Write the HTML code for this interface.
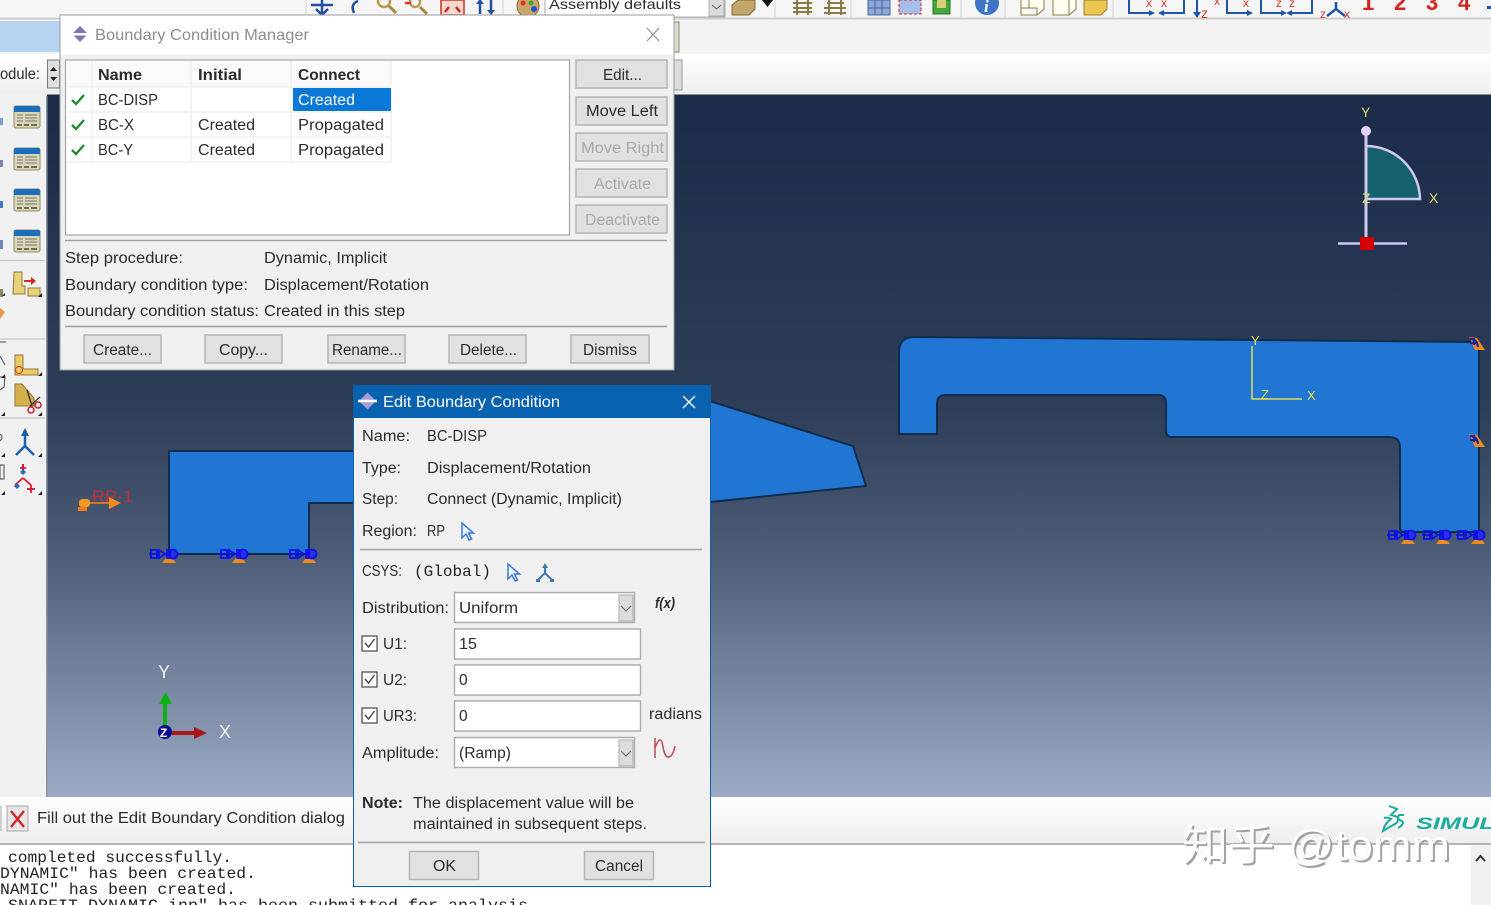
<!DOCTYPE html>
<html><head><meta charset="utf-8"><title>Boundary Condition Manager</title>
<style>
html,body{margin:0;padding:0;width:1491px;height:905px;overflow:hidden;background:#f0f0f0}
svg{display:block;filter:blur(.35px)}
text{font-family:"Liberation Sans","Noto Sans CJK SC",sans-serif;font-size:15.5px;fill:#2b2b2b;white-space:pre}
.b{font-weight:bold}
.d{fill:#a8a8a8;stroke:none}
.m{font-family:"Liberation Mono",monospace;font-size:16px;fill:#222}
.btn{fill:#e1e1e1;stroke:#b4b4b4;stroke-width:1.5}
.inp{fill:#fff;stroke:#aeaeae;stroke-width:1.5}
.sep{stroke:#a0a0a0;stroke-width:1.5}
.r{font-weight:bold;fill:#d2231f;font-size:22px}
.ax{fill:#d5392f;font-size:12px}
</style></head><body>
<svg width="1491" height="905" viewBox="0 0 1491 905" xmlns="http://www.w3.org/2000/svg">
<defs>
<linearGradient id="vp" x1="0" y1="0" x2="0" y2="1">
<stop offset="0" stop-color="#1b2b47"/><stop offset=".45" stop-color="#2f3e58"/><stop offset=".66" stop-color="#4f5e78"/><stop offset=".85" stop-color="#7a89a3"/><stop offset="1" stop-color="#9cabc5"/>
</linearGradient>
<linearGradient id="bar" x1="0" y1="0" x2="0" y2="1"><stop offset="0" stop-color="#fff"/><stop offset="1" stop-color="#eeeeee"/></linearGradient>
<g id="tbl"><rect x="0" y="0" width="26" height="22" rx="2" fill="#d9d5b8" stroke="#8f8a68"/><path d="M0 6V2q0-2 2-2h22q2 0 2 2v4z" fill="#1c6dbb"/><path d="M3 9h6M3 12h6M3 15h6M11 9h12M11 12h12M11 15h12" stroke="#77776c" stroke-width="1.100"/><path d="M3 18h5v2H3zM10 18h5v2h-5zM17 18h6v2h-6z" fill="#6d6b50"/></g>
<g id="bc" fill="none" stroke="#0a12e8" stroke-width="1.800"><path d="M-14-4h6v8h-6zM-16 0h10M-6-4l6 4-6 4zM0 0h3"/><circle cx="8" cy="0" r="4.500" fill="#2a30e8"/><path d="M2-4h3v8H2z"/></g>
<path id="tri" d="M-7 4L0-5 7 4z" fill="#ef8a1e"/>
</defs>

<!-- chrome -->
<rect width="1491" height="905" fill="#f0f0f0"/>
<rect x="0" y="0" width="1491" height="18" fill="#f5f5f5"/>
<rect x="0" y="17.500" width="1491" height="2" fill="#cfcfcf"/>
<rect x="0" y="20" width="1491" height="34" fill="#f3f3f3"/>
<rect x="0" y="54" width="1491" height="40" fill="url(#bar)"/>
<rect x="0" y="21" width="62" height="31" fill="#b6d4f1"/>
<rect x="674" y="22" width="5" height="30" fill="#dcdcd0" stroke="#8a8a70"/>
<rect x="674" y="60" width="8" height="30" fill="#dcdcdc" stroke="#999"/>
<rect x="47" y="94" width="1444" height="2" fill="#8b8f96"/>
<rect x="47" y="95" width="1444" height="702" fill="url(#vp)"/>
<rect x="0" y="96" width="47" height="701" fill="#f1f1f1"/>
<rect x="46" y="96" width="1.500" height="701" fill="#8c93a0"/>
<rect x="0" y="797" width="1491" height="46" fill="url(#bar)"/>
<rect x="0" y="843" width="1491" height="2" fill="#b4b4b4"/>
<rect x="0" y="845" width="1491" height="60" fill="#fff"/>
<rect x="1471" y="846" width="20" height="59" fill="#f0f0f0"/>
<path d="M1476 861l4.500-5 4.500 5" fill="none" stroke="#333" stroke-width="2"/>

<!-- top toolbar -->
<g fill="none" stroke-width="2.500">
<path d="M311 5h22M322-4v18M316 9l6 6 6-6" stroke="#23509c"/>
<path d="M358 1q-8 3-4 12" stroke="#23509c"/>
<circle cx="384" cy="1" r="6" stroke="#b89b55"/><path d="M389 6l7 7" stroke="#a8873a" stroke-width="3"/>
<circle cx="415" cy="2" r="5" stroke="#b89b55"/><path d="M420 7l7 7" stroke="#a8873a" stroke-width="3"/>
<path d="M405 3h6M408 0v-2" stroke="#d33"/>
<rect x="441" y="0" width="23" height="15" fill="#f4d9cf" stroke="#c9331f" stroke-width="1.500"/><path d="M445 12l4-5M460 12l-4-5" stroke="#d2231f"/>
<path d="M480 14V0M491 0v14" stroke="#23509c"/><path d="M476 4l4-5 4 5M487 10l4 5 4-5" fill="#23509c" stroke="none"/>
</g>
<circle cx="528" cy="6" r="11" fill="#caa66b" stroke="#8a6a36"/><circle cx="523" cy="3" r="2.500" fill="#d33"/><circle cx="531" cy="3" r="2.500" fill="#3a3"/><circle cx="534" cy="9" r="3" fill="#25c"/>
<rect x="545" y="-3" width="180" height="20" fill="#fff" stroke="#adadad"/>
<rect x="709" y="-3" width="15" height="19" fill="#dcdcdc" stroke="#adadad"/><path d="M712 5l4.500 4 4.500-4" fill="none" stroke="#666"/>
<text x="549" y="9" textLength="132" lengthAdjust="spacingAndGlyphs" style="font-size:14px">Assembly defaults</text>
<g stroke="#d8d8d8"><path d="M306 0v17M503 0v17M775 0v17M851 0v17M961 0v17M1005 0v17M1113 0v17"/></g>
<path d="M732 5l6-5h17v9l-6 6h-17z" fill="#c3a66a" stroke="#806a30"/>
<path d="M762 0h11l-5.500 7z" fill="#111"/>
<path d="M797 0v15M808 0v15M793 3h19M793 8h19M793 12h19" stroke="#8a7a45" stroke-width="2"/>
<path d="M829 0v15M841 0v15M824 8h22M824 13h22M827 3h17" stroke="#8a7a45" stroke-width="2"/>
<path d="M868 0h22v15h-22z" fill="#8ea8d8" stroke="#4a62a0"/><path d="M875 0v15M882 0v15M868 8h22" stroke="#4a62a0"/>
<path d="M899 0h22v14h-22z" fill="#a7bee8" stroke="#c22" stroke-dasharray="3 2"/>
<path d="M933 0h17v14h-17z" fill="#44a83e" stroke="#1e7a1e"/><path d="M937 0h9v8h-9z" fill="#d8cf7c"/>
<ellipse cx="987" cy="3" rx="12" ry="12" fill="#3d74c4"/><text x="984" y="12" style="font:italic bold 17px 'Liberation Serif',serif;fill:#fff">i</text>
<path d="M1021 0v15h16l7-6V0M1021 8h16v7M1029 0v8" fill="#fffdf0" stroke="#8a7a45"/>
<path d="M1053 0v15h16l7-6V0" fill="#fffdf0" stroke="#8a7a45"/><path d="M1069 0v15" stroke="#8a7a45"/>
<path d="M1084 0v15h17l6-6V0z" fill="#ecc552" stroke="#9a8030"/>
<g fill="none" stroke="#1f57a8" stroke-width="2">
<path d="M1129 0v13h21"/><path d="M1184 0v13h-21"/><path d="M1197 0v13"/><path d="M1227 0v13h21"/><path d="M1261 0v13h21"/><path d="M1312 0v13h-21"/>
<path d="M1336 2v7l-9 7M1336 9l9 7" stroke-width="2.500"/>
</g>
<g fill="#1f57a8"><path d="M1149 10l6 3-6 3zM1164 10l-6 3 6 3zM1193 12h8l-4 6zM1247 10l6 3-6 3zM1281 10l6 3-6 3zM1292 10l-6 3 6 3z"/></g>
<text class="ax" x="1146" y="7">x</text><text class="ax" x="1161" y="7">x</text><text class="ax" x="1201" y="18" style="font-size:14px">z</text><text class="ax" x="1214" y="5">x</text><text class="ax" x="1243" y="7">x</text><text class="ax" x="1276" y="7">z</text><text class="ax" x="1289" y="7">z</text><text class="ax" x="1320" y="18">z</text><text class="ax" x="1344" y="18">x</text>
<text class="r" x="1362" y="10">1</text><text class="r" x="1394" y="10">2</text><text class="r" x="1426" y="10">3</text><text class="r" x="1458" y="10">4</text>
<path d="M1487 6h4v3h-4z" fill="#1f57a8"/>

<text x="0" y="79" textLength="40" lengthAdjust="spacingAndGlyphs">odule:</text>
<rect x="47.500" y="60" width="12" height="28" fill="#dedede" stroke="#777"/><path d="M50 71l3.500-4 3.500 4zM50 77l3.500 4 3.500-4z" fill="#222"/>

<!-- left toolbar -->
<use href="#tbl" x="14" y="106"/><use href="#tbl" x="14" y="148"/><use href="#tbl" x="14" y="189"/><use href="#tbl" x="14" y="230"/>
<path d="M0 260.500h45M0 339h45M0 418h45" stroke="#c6c6c6" stroke-width="1.200"/>
<rect x="0" y="118" width="3" height="7" fill="#7da0d0"/><rect x="0" y="160" width="3" height="7" fill="#7a86b0"/><rect x="0" y="201" width="3" height="7" fill="#3f78c0"/><rect x="0" y="240" width="3" height="9" fill="#6f86b5"/>
<path d="M0 289h3v8H0z" fill="#8a8a6a"/><path d="M0 308l5 4-5 7z" fill="#e69a3f"/>
<path d="M14 272h8v14h3v8H13z" fill="#ead27a" stroke="#8e7a35"/><path d="M28 288h12v8H28z" fill="#ead27a" stroke="#8e7a35"/><path d="M24 280h7v-3l5 4-5 4v-3h-7z" fill="#d3261c"/>
<path d="M15 355h8v14h15v6H15z" fill="#ecca68" stroke="#8e7a35"/><circle cx="19" cy="370" r="3.500" fill="none" stroke="#d8381f"/>
<path d="M15 384h7l12 14v8H15z" fill="#d5b04f" stroke="#8e7a35"/><path d="M27 390l5 16M40 397l-10 9" stroke="#333" stroke-width="1.300"/><circle cx="31" cy="410" r="3" fill="none" stroke="#c8202a" stroke-width="1.500"/><circle cx="38" cy="405" r="3" fill="none" stroke="#c8202a" stroke-width="1.500"/>
<path d="M25 430v16l-9 9M25 446l9 9" fill="none" stroke="#1c5faf" stroke-width="2.500"/><path d="M21 436l4-8 4 8z" fill="#1c5faf"/>
<path d="M22 464h2v6h-2z" fill="#d13"/><path d="M20 468h6M23 478l-8 7M23 478l8 7" stroke="#d13" stroke-width="1.700"/><path d="M20 472l3-3 3 3-3 3zM14 486l3-3 3 3-3 3z" fill="#2566c0"/><path d="M27 489h8M31 485v8" stroke="#d13" stroke-width="1.700"/>
<path d="M0 342h6M0 356l5 9M0 377h5l-1 10-4 3M0 434q4 3 0 7M0 465h4v14H0z" fill="none" stroke="#666" stroke-width="1.200"/>
<path d="M5 296v-3l-3 3zM42 297v-4l-4 4zM42 376v-4l-4 4zM5 378v-4l-4 4zM42 416v-4l-4 4zM5 416v-4l-4 4zM42 457v-4l-4 4zM5 457v-4l-4 4zM42 495v-4l-4 4zM5 495v-4l-4 4z" fill="#222"/>

<!-- parts -->
<g fill="#2176d3" stroke="#0d2c4e" stroke-width="2">
<path d="M169 451H360V503H309V554H169z"/>
<path d="M700 398L853 446L866 486L700 503z"/>
<path d="M899 352Q899 337 914 337L1479 342V532H1404Q1400 532 1400 528V448Q1400 437 1389 437H1172Q1166 437 1166 431V403Q1166 395 1158 395H946Q937 395 937 404V434H899z"/>
</g>

<!-- mini sketch glyph -->
<path d="M1366 146A54 54 0 0 1 1420 199H1366z" fill="#14606f" stroke="#cfc9ee" stroke-width="2.500"/>
<path d="M1366 131V243" stroke="#d0c8f0" stroke-width="3"/>
<path d="M1338 243.500h69" stroke="#cfc9ee" stroke-width="2.500"/>
<circle cx="1366" cy="131" r="5" fill="#e2d2fa"/>
<rect x="1360" y="237" width="14" height="13" fill="#d30000"/>
<text x="1361" y="117" style="font-size:14px;fill:#dcdc78">Y</text><text x="1429" y="203" style="font-size:14px;fill:#dcdc78">X</text><text x="1362" y="203" style="font-size:14px;fill:#dcdc78">Z</text>

<!-- local csys on part -->
<path d="M1252 346V399H1302" fill="none" stroke="#dede55" stroke-width="1.500"/>
<text x="1251" y="345" style="font-size:13px;fill:#e3e34a">Y</text><text x="1261" y="399" style="font-size:13px;fill:#e3e34a">Z</text><text x="1307" y="400" style="font-size:13px;fill:#e3e34a">X</text>

<!-- BC marks -->
<use href="#tri" x="169" y="559"/><use href="#tri" x="239" y="559"/><use href="#tri" x="309" y="559"/>
<use href="#bc" x="165" y="554"/><use href="#bc" x="235" y="554"/><use href="#bc" x="304" y="554"/>
<use href="#tri" x="1408" y="540"/><use href="#tri" x="1443" y="540"/><use href="#tri" x="1478" y="540"/>
<use href="#bc" x="1403" y="535"/><use href="#bc" x="1438" y="535"/><use href="#bc" x="1472" y="535"/>
<path d="M1469 337l8 1 8 12h-10z" fill="#ef8a1e"/><path d="M1470 339q7 0 8 8M1474 338v7M1470 343h6" fill="none" stroke="#22229a" stroke-width="2.200"/>
<path d="M1469 434l8 1 8 12h-10z" fill="#ef8a1e"/><path d="M1470 436q7 0 8 8M1474 435v7M1470 440h6" fill="none" stroke="#22229a" stroke-width="2.200"/>

<!-- RP -->
<text x="92" y="502" textLength="41" lengthAdjust="spacingAndGlyphs" style="font-size:17px;fill:#c0303a">RP-1</text>
<path d="M85 503H110" stroke="#ef8a1e" stroke-width="1.500"/><path d="M109 497l12 6-12 6z" fill="#ef8a1e"/>
<rect x="79" y="499" width="11" height="8" rx="3" fill="#ef9a1e"/><rect x="78" y="507" width="9" height="4" fill="#ef7a1e"/>

<!-- global triad -->
<path d="M165 726V700" stroke="#10b010" stroke-width="4"/><path d="M159 704l6.500-12 6.500 12z" fill="#10b010"/>
<path d="M172 733H197" stroke="#a81818" stroke-width="4"/><path d="M194 727l13 6-13 6z" fill="#a81818"/>
<circle cx="165" cy="732" r="7" fill="#0a0a90"/><text x="160" y="737" style="font-size:12px;fill:#fff;font-weight:bold">Z</text>
<text x="158" y="678" style="font-size:18px;fill:#f4f4f4">Y</text><text x="219" y="738" style="font-size:18px;fill:#f4f4f4">X</text>

<!-- prompt -->
<rect x="7" y="806" width="21" height="25" fill="#e6e6e6" stroke="#a9a9a9"/>
<path d="M11 811l13 16M24 811l-13 16" stroke="#d6232a" stroke-width="2.300"/>
<rect x="0" y="806" width="2" height="25" fill="#cfcfcf"/>
<text x="37" y="823" textLength="308" lengthAdjust="spacingAndGlyphs">Fill out the Edit Boundary Condition dialog</text>

<!-- logo -->
<path d="M1389 806l8 3-6 6 7 2q1 6-5 8l-10 6q2-8 8-12-3-2-7-1M1404 815h-5q-3 4 3 6 3 3-4 7" fill="none" stroke="#1eab9c" stroke-width="2"/>
<text x="1416" y="829" textLength="104" lengthAdjust="spacingAndGlyphs" style="font:italic bold 17px 'Liberation Sans',sans-serif;fill:#1eab9c">SIMULIA</text>

<!-- messages -->
<text class="m" x="8" y="862" textLength="224" lengthAdjust="spacingAndGlyphs">completed successfully.</text>
<text class="m" x="0" y="878" textLength="256" lengthAdjust="spacingAndGlyphs">DYNAMIC" has been created.</text>
<text class="m" x="0" y="894" textLength="236" lengthAdjust="spacingAndGlyphs">NAMIC" has been created.</text>
<text class="m" x="8" y="910" textLength="520" lengthAdjust="spacingAndGlyphs">SNAPFIT_DYNAMIC.inp" has been submitted for analysis</text>

<!-- watermark -->
<text x="1184" y="862" textLength="268" lengthAdjust="spacingAndGlyphs" style="font-size:43px;fill:#a2a2a2">知乎 @tomm</text>
<text x="1182" y="860" textLength="268" lengthAdjust="spacingAndGlyphs" style="font-size:43px;fill:#fdfdfd">知乎 @tomm</text>

<!-- Boundary Condition Manager -->
<rect x="60" y="15" width="614" height="355" fill="#f0f0f0" stroke="#9b9b9b"/>
<rect x="60.500" y="15.500" width="613" height="39" fill="#fff"/>
<g><path d="M72 34l8-8 8 8-8 8z" fill="#7c76b8"/><path d="M71 33h18v2.500H71z" fill="#fff"/></g>
<text x="95" y="40" textLength="214" lengthAdjust="spacingAndGlyphs" style="font-size:16px;fill:#8c8c8c">Boundary Condition Manager</text>
<path d="M647 28l12 13M659 28l-12 13" stroke="#8a8a8a" stroke-width="1.100"/>
<rect x="65.500" y="60" width="504" height="175" fill="#fff" stroke="#a6a6a6" stroke-width="1.200"/>
<rect x="66" y="61" width="325" height="26" fill="#fafafa"/>
<path d="M92 61V162M191 61V162M291 61V162M391 61V162M66 87H391M66 112H391M66 137H391M66 162H391" stroke="#ececec" stroke-width="1.200"/>
<rect x="293" y="88" width="98" height="23" fill="#0a78d7"/>
<path d="M72 100l4 4 8-9" fill="none" stroke="#1a8a2c" stroke-width="2.300"/><path d="M72 125l4 4 8-9" fill="none" stroke="#1a8a2c" stroke-width="2.300"/><path d="M72 150l4 4 8-9" fill="none" stroke="#1a8a2c" stroke-width="2.300"/>
<text class="b" x="98" y="80" textLength="44" lengthAdjust="spacingAndGlyphs">Name</text>
<text class="b" x="198" y="80" textLength="44" lengthAdjust="spacingAndGlyphs">Initial</text>
<text class="b" x="298" y="80" textLength="62" lengthAdjust="spacingAndGlyphs">Connect</text>
<text x="98" y="105" textLength="60" lengthAdjust="spacingAndGlyphs">BC-DISP</text>
<text x="298" y="105" textLength="57" lengthAdjust="spacingAndGlyphs" style="fill:#fff">Created</text>
<text x="98" y="130" textLength="36" lengthAdjust="spacingAndGlyphs">BC-X</text>
<text x="198" y="130" textLength="57" lengthAdjust="spacingAndGlyphs">Created</text>
<text x="298" y="130" textLength="86" lengthAdjust="spacingAndGlyphs">Propagated</text>
<text x="98" y="155" textLength="35" lengthAdjust="spacingAndGlyphs">BC-Y</text>
<text x="198" y="155" textLength="57" lengthAdjust="spacingAndGlyphs">Created</text>
<text x="298" y="155" textLength="86" lengthAdjust="spacingAndGlyphs">Propagated</text>
<rect class="btn" x="576" y="60" width="91" height="28"/><rect class="btn" x="576" y="97" width="91" height="28"/><rect class="btn" x="576" y="133" width="91" height="28"/><rect class="btn" x="576" y="169" width="91" height="28"/><rect class="btn" x="576" y="205" width="91" height="28"/>
<text x="603" y="80" textLength="39" lengthAdjust="spacingAndGlyphs">Edit...</text>
<text x="586" y="116" textLength="72" lengthAdjust="spacingAndGlyphs">Move Left</text>
<text class="d" x="581" y="153" textLength="83" lengthAdjust="spacingAndGlyphs">Move Right</text>
<text class="d" x="594" y="189" textLength="57" lengthAdjust="spacingAndGlyphs">Activate</text>
<text class="d" x="585" y="225" textLength="75" lengthAdjust="spacingAndGlyphs">Deactivate</text>
<path class="sep" d="M65 240.500H667M65 326.500H667"/>
<text x="65" y="263" textLength="118" lengthAdjust="spacingAndGlyphs">Step procedure:</text>
<text x="264" y="263" textLength="123" lengthAdjust="spacingAndGlyphs">Dynamic, Implicit</text>
<text x="65" y="290" textLength="183" lengthAdjust="spacingAndGlyphs">Boundary condition type:</text>
<text x="264" y="290" textLength="165" lengthAdjust="spacingAndGlyphs">Displacement/Rotation</text>
<text x="65" y="316" textLength="194" lengthAdjust="spacingAndGlyphs">Boundary condition status:</text>
<text x="264" y="316" textLength="141" lengthAdjust="spacingAndGlyphs">Created in this step</text>
<rect class="btn" x="84" y="335" width="77" height="28"/><rect class="btn" x="205" y="335" width="77" height="28"/><rect class="btn" x="328" y="335" width="77" height="28"/><rect class="btn" x="449" y="335" width="77" height="28"/><rect class="btn" x="571" y="335" width="78" height="28"/>
<text x="93" y="355" textLength="59" lengthAdjust="spacingAndGlyphs">Create...</text>
<text x="219" y="355" textLength="49" lengthAdjust="spacingAndGlyphs">Copy...</text>
<text x="332" y="355" textLength="70" lengthAdjust="spacingAndGlyphs">Rename...</text>
<text x="460" y="355" textLength="57" lengthAdjust="spacingAndGlyphs">Delete...</text>
<text x="583" y="355" textLength="54" lengthAdjust="spacingAndGlyphs">Dismiss</text>

<!-- Edit Boundary Condition -->
<rect x="353.500" y="385.500" width="357" height="501" fill="#f0f0f0" stroke="#0b5ea8"/>
<rect x="354" y="385" width="356" height="33" fill="#0862b0"/>
<g><path d="M359 401l8.500-8.500 8.500 8.500-8.500 8.500z" fill="#a79dd8"/><path d="M358 399.800h19v2.500h-19z" fill="#fff"/></g>
<text x="383" y="407" textLength="177" lengthAdjust="spacingAndGlyphs" style="font-size:16px;fill:#fff">Edit Boundary Condition</text>
<path d="M683 396l12 12M695 396l-12 12" stroke="#fff" stroke-width="1.300"/>
<text x="362" y="441" textLength="48" lengthAdjust="spacingAndGlyphs">Name:</text><text x="427" y="441" textLength="60" lengthAdjust="spacingAndGlyphs">BC-DISP</text>
<text x="362" y="473" textLength="39" lengthAdjust="spacingAndGlyphs">Type:</text><text x="427" y="473" textLength="164" lengthAdjust="spacingAndGlyphs">Displacement/Rotation</text>
<text x="362" y="504" textLength="36" lengthAdjust="spacingAndGlyphs">Step:</text><text x="427" y="504" textLength="195" lengthAdjust="spacingAndGlyphs">Connect (Dynamic, Implicit)</text>
<text x="362" y="536" textLength="55" lengthAdjust="spacingAndGlyphs">Region:</text><text x="427" y="536" textLength="18" lengthAdjust="spacingAndGlyphs">RP</text>
<path d="M462 523v15l4-4 3 6 2.500-1-3-6h5z" fill="#eaf1fc" stroke="#3f79d6" stroke-width="1.500"/>
<path class="sep" d="M360 549.500H702"/>
<text x="362" y="576" textLength="40" lengthAdjust="spacingAndGlyphs">CSYS:</text>
<text class="m" x="414" y="576" textLength="77" lengthAdjust="spacingAndGlyphs">(Global)</text>
<path d="M508 564v15l4-4 3 6 2.500-1-3-6h5z" fill="#eaf1fc" stroke="#3f79d6" stroke-width="1.500"/>
<path d="M545 565v8l-7 7M545 573l7 7" fill="none" stroke="#3f79b6" stroke-width="2"/><path d="M542 568l3-5 3 5zM536 579h4v3h-4zM550 579h4v3h-4z" fill="#3f79b6"/>
<text x="362" y="613" textLength="87" lengthAdjust="spacingAndGlyphs">Distribution:</text>
<rect class="inp" x="454.500" y="592.500" width="180" height="30"/>
<rect x="619" y="595" width="14" height="26" fill="#dcdcdc" stroke="#ababab"/><path d="M621 606l5 5 5-5" fill="none" stroke="#666"/>
<text x="459" y="613" textLength="59" lengthAdjust="spacingAndGlyphs">Uniform</text>
<text x="655" y="608" textLength="20" lengthAdjust="spacingAndGlyphs" style="font:italic bold 15px 'Liberation Sans',sans-serif">f(x)</text>
<rect class="inp" x="454.500" y="629" width="186" height="30"/><rect class="inp" x="454.500" y="665" width="186" height="30"/><rect class="inp" x="454.500" y="701" width="186" height="30"/>
<g fill="#fff" stroke="#555" stroke-width="1.300"><rect x="362" y="636" width="15" height="15"/><rect x="362" y="672" width="15" height="15"/><rect x="362" y="708" width="15" height="15"/></g>
<path d="M365 643l3.500 4 6-8M365 679l3.500 4 6-8M365 715l3.500 4 6-8" fill="none" stroke="#444" stroke-width="1.400"/>
<text x="383" y="649" textLength="24" lengthAdjust="spacingAndGlyphs">U1:</text><text x="459" y="649" textLength="18" lengthAdjust="spacingAndGlyphs">15</text>
<text x="383" y="685" textLength="24" lengthAdjust="spacingAndGlyphs">U2:</text><text x="459" y="685">0</text>
<text x="383" y="721" textLength="34" lengthAdjust="spacingAndGlyphs">UR3:</text><text x="459" y="721">0</text>
<text x="649" y="719" textLength="53" lengthAdjust="spacingAndGlyphs">radians</text>
<text x="362" y="758" textLength="77" lengthAdjust="spacingAndGlyphs">Amplitude:</text>
<rect class="inp" x="454.500" y="737.500" width="180" height="30"/>
<rect x="619" y="740" width="14" height="26" fill="#dcdcdc" stroke="#ababab"/><path d="M621 751l5 5 5-5" fill="none" stroke="#666"/>
<text x="459" y="758" textLength="52" lengthAdjust="spacingAndGlyphs">(Ramp)</text>
<path d="M655 738V758M655 748q3-8 5-8t3 7q2 11 6 10t6-11" fill="none" stroke="#b54b55" stroke-width="1.500"/>
<text class="b" x="362" y="808" textLength="41" lengthAdjust="spacingAndGlyphs">Note:</text>
<text x="413" y="808" textLength="221" lengthAdjust="spacingAndGlyphs">The displacement value will be</text>
<text x="413" y="829" textLength="234" lengthAdjust="spacingAndGlyphs">maintained in subsequent steps.</text>
<path class="sep" d="M358 842.500H705"/>
<rect class="btn" x="409.500" y="851.500" width="69" height="28"/><rect class="btn" x="584.500" y="851.500" width="69" height="28"/>
<text x="433" y="871" textLength="23" lengthAdjust="spacingAndGlyphs">OK</text>
<text x="595" y="871" textLength="48" lengthAdjust="spacingAndGlyphs">Cancel</text>
</svg>
</body></html>
